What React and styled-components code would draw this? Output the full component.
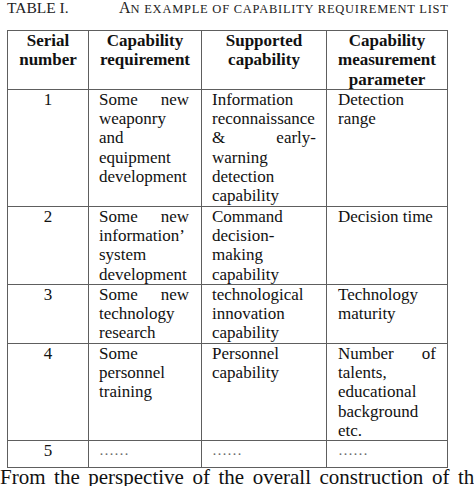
import React from 'react';
import styled, { createGlobalStyle } from 'styled-components';

const GlobalStyle = createGlobalStyle`
    html, body {
        margin: 0;
        padding: 0;
        background: #ffffff;
        overflow: hidden;
    }
    body {
        font-family: "Liberation Serif", "Times New Roman", serif;
        color: #111111;
    }
`;

const rows = [
    {
        serial: '1',
        requirement: 'Some new weaponry and equipment development',
        supported: 'Information reconnaissance & early-warning detection capability',
        parameter: 'Detection range'
    },
    {
        serial: '2',
        requirement: 'Some new information\u2019 system development',
        supported: 'Command decision-making capability',
        parameter: 'Decision time'
    },
    {
        serial: '3',
        requirement: 'Some new technology research',
        supported: 'technological innovation capability',
        parameter: 'Technology maturity'
    },
    {
        serial: '4',
        requirement: 'Some personnel training',
        supported: 'Personnel capability',
        parameter: 'Number of talents, educational background etc.'
    },
    {
        serial: '5',
        requirement: '\u2026\u2026',
        supported: '\u2026\u2026',
        parameter: '\u2026\u2026',
        last: true
    }
];

function App() {
    return (
        <Page>
            <GlobalStyle />
            <Title>
                <TitleLabel>TABLE I.</TitleLabel>
                <Caption>
                    <CapBig>A</CapBig>
                    <CapSmall>n example of capability requirement list</CapSmall>
                </Caption>
            </Title>

            <Table>
                <colgroup>
                    <col style={{ width: 81 }} />
                    <col style={{ width: 113 }} />
                    <col style={{ width: 125 }} />
                    <col style={{ width: 121 }} />
                </colgroup>
                <thead>
                    <tr>
                        <HeadCell>Serial number</HeadCell>
                        <HeadCell>Capability requirement</HeadCell>
                        <HeadCell>Supported capability</HeadCell>
                        <HeadCell>Capability measurement parameter</HeadCell>
                    </tr>
                </thead>
                <tbody>
                    {rows.map((row) => (
                        <tr key={row.serial}>
                            <SerialCell $last={row.last}>{row.serial}</SerialCell>
                            <TextCell $last={row.last} $right={12}>{row.requirement}</TextCell>
                            <TextCell $last={row.last} $right={10}>{row.supported}</TextCell>
                            <TextCell $last={row.last} $left={11} $right={11}>{row.parameter}</TextCell>
                        </tr>
                    ))}
                </tbody>
            </Table>

            <Paragraph>From the perspective of the overall construction of the system</Paragraph>
        </Page>
    );
}

const Page = styled.div`
    width: 474px;
    height: 486px;
    overflow: hidden;
`;

const Title = styled.div`
    display: flex;
    align-items: baseline;
    padding-left: 7px;
    height: 16px;
    line-height: 16px;
    margin-bottom: 14px;
    color: #222222;
    white-space: nowrap;
`;

const TitleLabel = styled.span`
    width: 112px;
    font-size: 15.5px;
`;

const Caption = styled.span`
    display: inline-flex;
    align-items: baseline;
`;

const CapBig = styled.span`
    font-size: 16px;
`;

const CapSmall = styled.span`
    font-size: 12.5px;
    text-transform: uppercase;
    letter-spacing: 0.75px;
`;

const Table = styled.table`
    margin-left: 7px;
    width: 440px;
    table-layout: fixed;
    border-collapse: collapse;
    font-family: "Liberation Serif", "Times New Roman", serif;
    font-size: 17px;
    line-height: 19.3px;
    color: #111111;

    th, td {
        border: 1px solid #5e5e5e;
        vertical-align: top;
        font-family: inherit;
    }
`;

const HeadCell = styled.th`
    padding: 0 4px;
    font-size: 17px;
    font-weight: bold;
    text-align: center;
`;

const SerialCell = styled.td`
    padding: 0 0 ${(p) => (p.$last ? '6px' : '0')};
    font-size: 17px;
    text-align: center;
`;

const TextCell = styled.td`
    padding: 0 ${(p) => p.$right}px ${(p) => (p.$last ? '6px' : '0')} ${(p) => p.$left || 10}px;
    text-align: justify;
    color: ${(p) => (p.$last ? '#6a6a6a' : 'inherit')};
    font-size: ${(p) => (p.$last ? '15px' : '17px')};
`;

const Paragraph = styled.p`
    margin: 0;
    font-size: 21px;
    line-height: 18px;
    white-space: nowrap;
    word-spacing: 3.3px;
`;

export default App;
